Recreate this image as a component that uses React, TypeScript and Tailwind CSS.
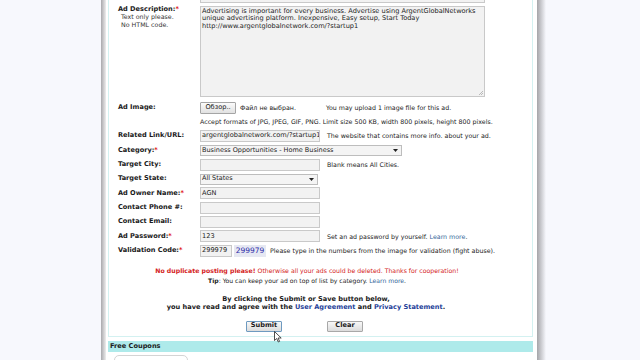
import React from "react";

function Label({ text, req }: { text: string; req?: boolean }) {
  return (
    <div className="w-[82px] shrink-0 text-[6.6px] font-bold text-[#1a1a1a]">
      {text}
      {req && <span className="text-[#e01010]">*</span>}
    </div>
  );
}

function Box({ w, children }: { w: string; children?: React.ReactNode }) {
  return (
    <div className={`${w} flex h-[12px] items-center overflow-hidden whitespace-nowrap border border-[#c9c9c9] bg-[#f2f2f2] px-[1px] text-[6.6px] text-[#222]`}>
      {children}
    </div>
  );
}

function Select({ w, text }: { w: string; text: string }) {
  return (
    <div className={`${w} flex h-[11px] items-center justify-between border border-[#bdbdbd] bg-[#f4f4f4] pl-[1px] pr-[3px] text-[6.5px] text-[#222]`}>
      <span>{text}</span>
      <svg width="5" height="3" viewBox="0 0 5 3"><path d="M0 0h5L2.5 3z" fill="#222" /></svg>
    </div>
  );
}

function Row({ label, req, children }: { label: string; req?: boolean; children?: React.ReactNode }) {
  return (
    <div className="flex h-[14.3px] items-center">
      <Label text={label} req={req} />
      <div className="flex items-center gap-[7px] whitespace-nowrap text-[#222]">{children}</div>
    </div>
  );
}

export default function App() {
  return (
    <div className="flex h-[360px] w-[640px] overflow-hidden bg-[#f7f8fd] font-['DejaVu_Sans',sans-serif] text-[6.3px] leading-[7.4px]">
      <div className="w-[101px] shrink-0" />
      <div className="w-[5px] shrink-0 bg-gradient-to-r from-[#a9a9ad] to-[#eeeeee]" />
      <div className="relative w-[431px] shrink-0 bg-white pl-[2px] pr-[4px]">
        <div className="h-[337px] border-x border-b border-[#d3f1f1] pl-[9px]">
          <div className="ml-[82px] h-[3px] w-[285px] border-x border-b border-[#c9c9c9] bg-[#f2f2f2]" />
          <div className="mt-[3px] flex">
            <div className="w-[82px] shrink-0">
              <div className="text-[6.6px] font-bold text-[#1a1a1a]">
                Ad Description:<span className="text-[#e01010]">*</span>
              </div>
              <div className="pl-[3px] text-[#333]">Text only please.</div>
              <div className="pl-[3px] text-[#333]">No HTML code.</div>
            </div>
            <div className="relative h-[91px] w-[285px] border border-[#c9c9c9] bg-[#f2f2f2] px-[1px] pt-[1px] text-[6.6px] text-[#222]">
              <div className="whitespace-nowrap">Advertising is important for every business. Advertise using ArgentGlobalNetworks</div>
              <div>unique advertising platform. Inexpensive, Easy setup, Start Today</div>
              <div>http://www.argentglobalnetwork.com/?startup1</div>
              <svg className="absolute bottom-[1px] right-[1px]" width="5" height="5" viewBox="0 0 5 5">
                <path d="M5 1L1 5M5 3L3 5" stroke="#aaa" strokeWidth="0.8" />
              </svg>
            </div>
          </div>
          <div className="mt-[5px] flex h-[12px] items-center">
            <Label text="Ad Image:" />
            <div className="flex h-[12px] w-[36px] items-center justify-center rounded-[1px] border border-[#a5a5a5] bg-gradient-to-b from-[#fbfbfb] to-[#e1e1e1] text-[6.6px] text-[#222]">
              Обзор..
            </div>
            <span className="ml-[4px] text-[#222]">Файл не выбран.</span>
            <span className="ml-[30px] text-[#222]">You may upload 1 image file for this ad.</span>
          </div>
          <div className="flex h-[15px] items-center whitespace-nowrap pl-[82px] text-[#222]">
            Accept formats of JPG, JPEG, GIF, PNG. Limit size 500 KB, width 800 pixels, height 800 pixels.
          </div>
          <Row label="Related Link/URL:">
            <Box w="w-[120px]">argentglobalnetwork.com/?startup1</Box>
            <span>The website that contains more info. about your ad.</span>
          </Row>
          <Row label="Category:" req>
            <Select w="w-[202px]" text="Business Opportunities - Home Business" />
          </Row>
          <Row label="Target City:">
            <Box w="w-[120px]" />
            <span>Blank means All Cities.</span>
          </Row>
          <Row label="Target State:">
            <Select w="w-[118px]" text="All States" />
          </Row>
          <Row label="Ad Owner Name:" req>
            <Box w="w-[120px]">AGN</Box>
          </Row>
          <Row label="Contact Phone #:">
            <Box w="w-[120px]" />
          </Row>
          <Row label="Contact Email:">
            <Box w="w-[120px]" />
          </Row>
          <Row label="Ad Password:" req>
            <Box w="w-[120px]">123</Box>
            <span>
              Set an ad password by yourself. <span className="text-[#336699]">Learn more</span>.
            </span>
          </Row>
          <Row label="Validation Code:" req>
            <div className="flex items-center">
              <Box w="w-[32px]">299979</Box>
              <div className="ml-[2px] flex h-[12px] w-[32px] items-center justify-center bg-[#e6e8f2] text-[7.5px] text-[#2a2aa8]">
                299979
              </div>
              <span className="ml-[4px]">Please type in the numbers from the image for validation (fight abuse).</span>
            </div>
          </Row>
          <div className="mt-[8px] flex h-[10px] items-center justify-center whitespace-nowrap pr-[36px] text-[6.2px] text-[#d42222]">
            <span className="font-bold">No duplicate posting please!</span>&nbsp;Otherwise all your ads could be deleted. Thanks for cooperation!
          </div>
          <div className="flex h-[10px] items-center justify-center whitespace-nowrap pr-[36px] text-[6.1px] text-[#222]">
            <span className="font-bold">Tip</span>: You can keep your ad on top of list by category.&nbsp;<span className="text-[#336699]">Learn more</span>.
          </div>
          <div className="mt-[9px] flex flex-col items-center whitespace-nowrap pr-[38px] text-[6.6px] font-bold leading-[8px] text-[#1a1a1a]">
            <div>By clicking the Submit or Save button below,</div>
            <div>
              you have read and agree with the <span className="text-[#1f3f99]">User Agreement</span> and{" "}
              <span className="text-[#1f3f99]">Privacy Statement</span>.
            </div>
          </div>
          <div className="mt-[10px] flex justify-center gap-[45px] pr-[41px] text-[6.6px]">
            <div className="flex h-[11px] w-[36px] items-center justify-center rounded-[1px] border border-[#6e9ac0] bg-gradient-to-b from-[#f8f8f8] to-[#dcdcdc] font-bold text-[#1a1a1a]">
              Submit
            </div>
            <div className="flex h-[11px] w-[36px] items-center justify-center rounded-[1px] border border-[#a8a8a8] bg-gradient-to-b from-[#f8f8f8] to-[#dcdcdc] font-bold text-[#1a1a1a]">
              Clear
            </div>
          </div>
        </div>
        <div className="mt-[4px] flex h-[11px] items-center bg-[#aeeaea] pl-[2px] text-[6.6px] font-bold text-[#1a1a1a]">
          Free Coupons
        </div>
        <div className="ml-[6px] mt-[3px] h-[20px] w-[74px] rounded-[5px] border border-[#d4d4d4]" />
        <svg className="absolute left-[168px] top-[331px]" width="8" height="12" viewBox="0 0 8 12">
          <path d="M0.5 0.5V9.5L2.7 7.5L4.3 11L5.6 10.4L4.1 7H7.2Z" fill="white" stroke="#222" strokeWidth="0.8" />
        </svg>
      </div>
      <div className="w-[9px] shrink-0 bg-gradient-to-r from-[#a5a5a9] to-[#f7f8fd]" />
    </div>
  );
}
